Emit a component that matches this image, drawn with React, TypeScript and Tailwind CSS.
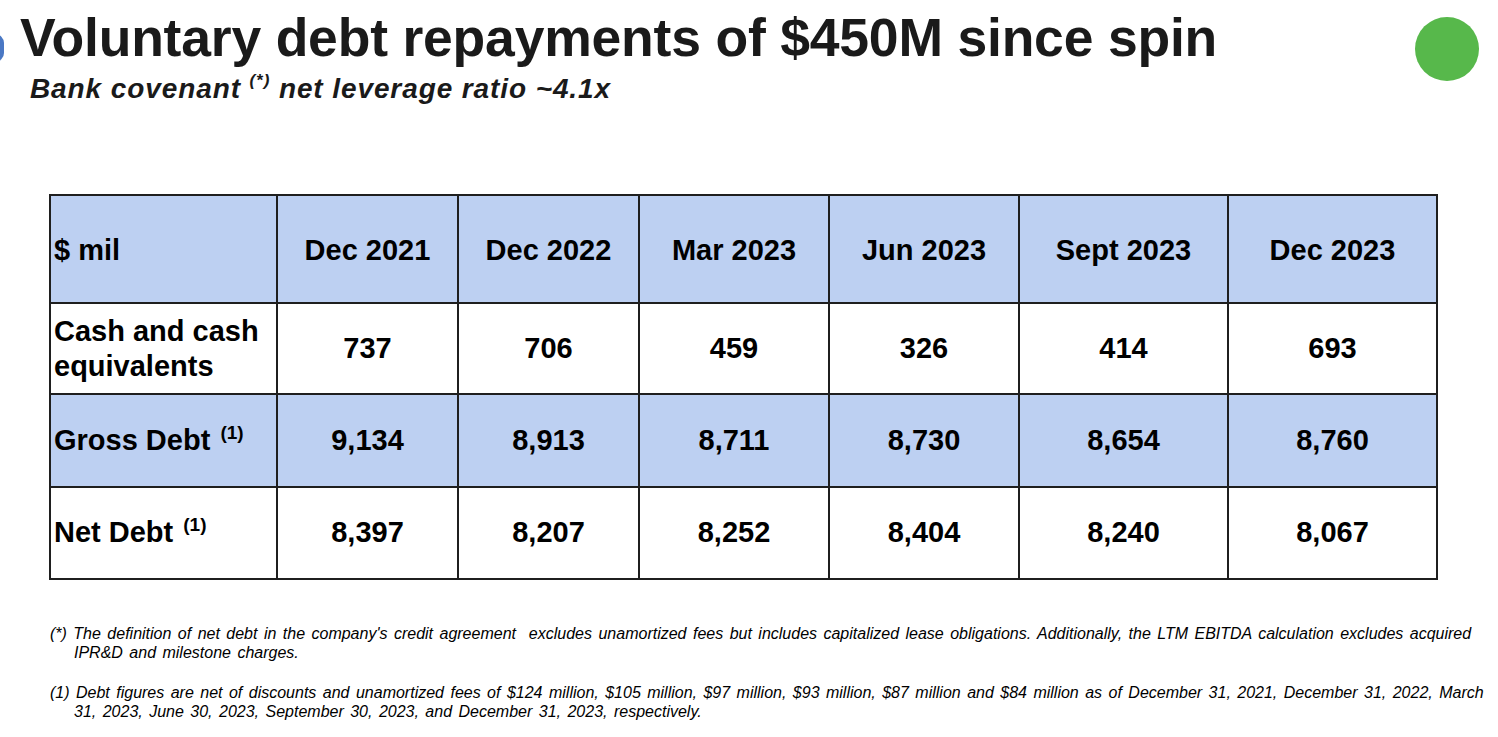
import React from "react";

const cols = ["Dec 2021", "Dec 2022", "Mar 2023", "Jun 2023", "Sept 2023", "Dec 2023"];
const widths = ["w-[227px]", "w-[181px]", "w-[181px]", "w-[190px]", "w-[190px]", "w-[209px]", "w-[209px]"];

const Sup = () => <sup className="text-[19px] relative -top-[11px] ml-[2px]">(1)</sup>;

const rows: { label: React.ReactNode; values: string[]; blue: boolean; h: string }[] = [
  {
    label: (
      <span className="block leading-[35px]">
        Cash and cash
        <br />
        equivalents
      </span>
    ),
    values: ["737", "706", "459", "326", "414", "693"],
    blue: false,
    h: "h-[91px]",
  },
  {
    label: (
      <span>
        Gross Debt <Sup />
      </span>
    ),
    values: ["9,134", "8,913", "8,711", "8,730", "8,654", "8,760"],
    blue: true,
    h: "h-[93px]",
  },
  {
    label: (
      <span>
        Net Debt <Sup />
      </span>
    ),
    values: ["8,397", "8,207", "8,252", "8,404", "8,240", "8,067"],
    blue: false,
    h: "h-[92px]",
  },
];

export default function App() {
  return (
    <div
      className="relative w-[1498px] h-[737px] bg-white overflow-hidden text-[#1a1a1a]"
      style={{ fontFamily: '"Liberation Sans", Arial, sans-serif' }}
    >
      {/* left edge partial blue decoration */}
      <div className="absolute -left-[14px] top-[34px] w-[18px] h-[28px] rounded-full bg-[#4a78c4]" />
      {/* green circle */}
      <div className="absolute left-[1415px] top-[17px] w-[64px] h-[64px] rounded-full bg-[#57b84b]" />

      <div className="pl-[20px] pt-[7px]">
        <h1 className="text-[53.5px] font-bold leading-[62px] tracking-[-0.2px]">
          Voluntary debt repayments of $450M since spin
        </h1>
        <p className="pl-[10px] text-[28px] font-bold italic leading-[32px] mt-[4px] tracking-[0.9px]">
          Bank covenant <sup className="text-[17px] relative -top-[12px]">(*)</sup> net leverage ratio ~4.1x
        </p>
      </div>

      <table className="ml-[49px] mt-[89px] border-collapse table-fixed w-[1389px] text-[29px] font-bold text-black">
        <colgroup>
          {widths.map((w, i) => (
            <col key={i} className={w} />
          ))}
        </colgroup>
        <tbody>
          <tr className="h-[108px] bg-[#bdd0f2]">
            <td className="border-2 border-[#1f1f1f] pl-[3px] pt-[4px] text-left">$ mil</td>
            {cols.map((c) => (
              <td key={c} className="border-2 border-[#1f1f1f] text-center pt-[4px]">
                {c}
              </td>
            ))}
          </tr>
          {rows.map((r, i) => (
            <tr key={i} className={`${r.h} ${r.blue ? "bg-[#bdd0f2]" : "bg-white"}`}>
              <td className="border-2 border-[#1f1f1f] pl-[3px] text-left">{r.label}</td>
              {r.values.map((v, j) => (
                <td key={j} className="border-2 border-[#1f1f1f] text-center">
                  {v}
                </td>
              ))}
            </tr>
          ))}
        </tbody>
      </table>

      <div className="ml-[50px] mt-[44px] text-[16px] italic leading-[19px] text-black w-[1446px] [word-spacing:2px]">
        <p className="pl-[24px] -indent-[24px]">
          (*) The definition of net debt in the company's credit agreement&nbsp; excludes unamortized fees but includes capitalized lease obligations. Additionally, the LTM EBITDA calculation excludes acquired IPR&amp;D and milestone charges.
        </p>
        <p className="pl-[24px] -indent-[24px] mt-[21px]">
          (1) Debt figures are net of discounts and unamortized fees of $124 million, $105 million, $97 million, $93 million, $87 million and $84 million as of December 31, 2021, December 31, 2022, March 31, 2023, June 30, 2023, September 30, 2023, and December 31, 2023, respectively.
        </p>
      </div>
    </div>
  );
}
